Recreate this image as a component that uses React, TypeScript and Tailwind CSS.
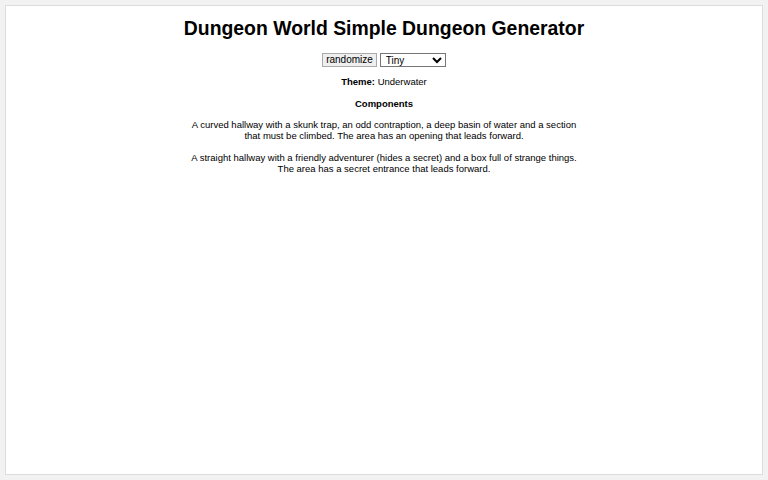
import { useState } from "react";

const sizes = ["Tiny", "Small", "Medium", "Large", "Huge"];

export default function App() {
  const [size, setSize] = useState("Tiny");

  return (
    <div className="h-[480px] w-[768px] bg-[#f2f2f2] p-[5px] font-['Liberation_Sans',Arial,sans-serif] text-black">
      <div className="flex h-full flex-col items-center border border-[#dcdcdc] bg-white pt-[10px]">
        <h1 className="text-[19.4px] font-bold leading-[24px]">
          Dungeon World Simple Dungeon Generator
        </h1>

        <div className="mt-[13px] flex items-center gap-[3px]">
          <button className="h-[14px] border border-[#aaa] bg-[#efefef] px-[3px] text-[10px] leading-[12px]">
            randomize
          </button>
          <select
            value={size}
            onChange={(e) => setSize(e.target.value)}
            className="h-[14px] w-[66px] border border-[#767676] bg-white px-[1px] text-[10px] leading-[12px]"
          >
            {sizes.map((s) => (
              <option key={s}>{s}</option>
            ))}
          </select>
        </div>

        <p className="mt-[9px] text-[9.5px] leading-[12px]">
          <b>Theme:</b> Underwater
        </p>

        <h2 className="mt-[10px] text-[9.5px] font-bold leading-[12px]">Components</h2>

        <div className="mt-[9px] flex w-[400px] flex-col gap-[11px] text-center text-[9.5px] leading-[11px]">
          <p>
            A curved hallway with a skunk trap, an odd contraption, a deep basin of water and a
            section that must be climbed. The area has an opening that leads forward.
          </p>
          <p>
            A straight hallway with a friendly adventurer (hides a secret) and a box full of
            strange things. The area has a secret entrance that leads forward.
          </p>
        </div>
      </div>
    </div>
  );
}
